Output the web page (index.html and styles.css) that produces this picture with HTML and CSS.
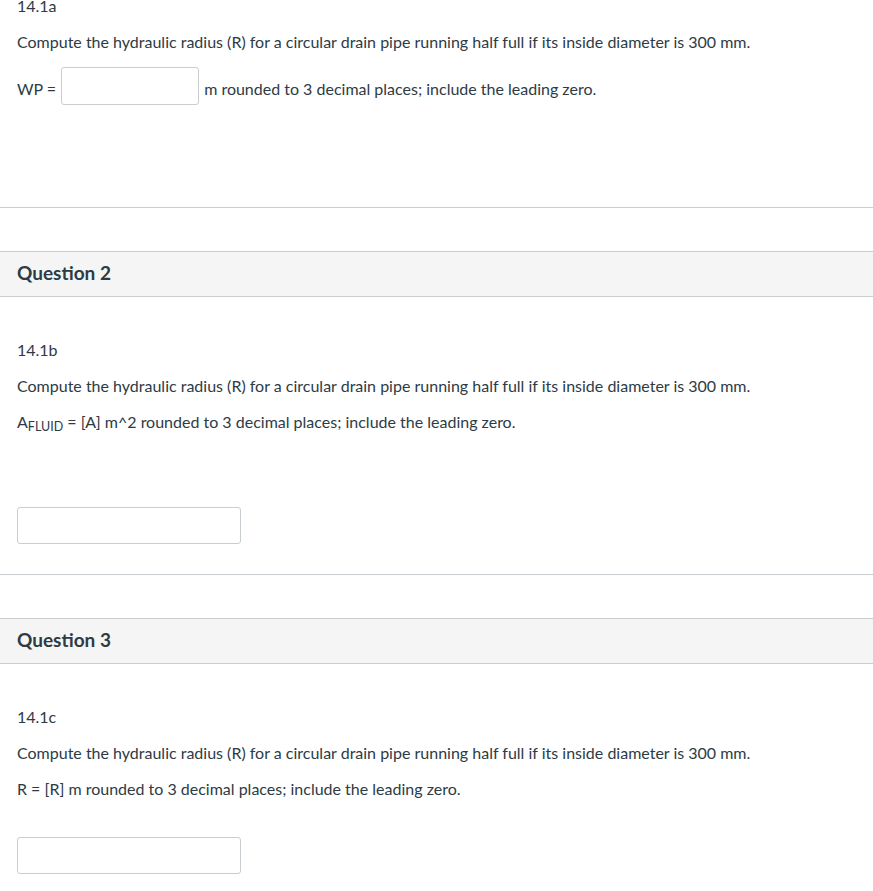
FILE: index.html
```html
<!DOCTYPE html>
<html>
<head>
<meta charset="utf-8">
<link rel="stylesheet" href="styles.css">
</head>
<body>
<div class="page">
  <div class="question first">
    <div class="question-body q1">
      <p>14.1a</p>
      <p>Compute the hydraulic radius (R) for a circular drain pipe running half full if its inside diameter is 300 mm.</p>
      <p class="answer-row"><span class="label">WP =</span><span class="input small"></span><span class="label">m rounded to 3 decimal places; include the leading zero.</span></p>
    </div>
  </div>

  <div class="question">
    <div class="question-header">Question 2</div>
    <div class="question-body">
      <p>14.1b</p>
      <p>Compute the hydraulic radius (R) for a circular drain pipe running half full if its inside diameter is 300 mm.</p>
      <p>A<sub>FLUID</sub> = [A] m^2 rounded to 3 decimal places; include the leading zero.</p>
      <div class="answer"><span class="input wide"></span></div>
    </div>
  </div>

  <div class="question">
    <div class="question-header">Question 3</div>
    <div class="question-body">
      <p>14.1c</p>
      <p>Compute the hydraulic radius (R) for a circular drain pipe running half full if its inside diameter is 300 mm.</p>
      <p>R = [R] m rounded to 3 decimal places; include the leading zero.</p>
      <div class="answer near"><span class="input wide"></span></div>
    </div>
  </div>
</div>
</body>
</html>
```

FILE: styles.css
```css
html, body {
  margin: 0;
  padding: 0;
  background: #ffffff;
}

body {
  font-family: Lato, "Noto Sans", sans-serif;
  font-size: 16px;
  color: #2d3b45;
}

.page {
  margin-top: -5px;
}

.question {
  border-bottom: 1px solid #c7cdd1;
  margin-bottom: 43px;
}

.question-header {
  background: #f5f5f5;
  border-top: 1px solid #c7cdd1;
  border-bottom: 1px solid #c7cdd1;
  box-sizing: border-box;
  height: 46px;
  padding: 0 17px 3px;
  display: flex;
  align-items: center;
  font-weight: bold;
  font-size: 19px;
}

.question-body {
  padding: 42px 17px 30px;
}

.question-body.q1 {
  padding: 0 17px 102px;
}

p {
  margin: 0 0 15px;
  line-height: 21px;
}

.question-body p:last-of-type {
  margin-bottom: 0;
}

.answer-row {
  margin: 0;
  display: flex;
  align-items: center;
  gap: 5px;
  height: 38px;
}

.label {
  padding-top: 4px;
}

sub {
  font-size: 12.5px;
  vertical-align: -3px;
  line-height: 0;
}

.answer {
  margin-top: 75px;
  display: flex;
}

.answer.near {
  margin-top: 38px;
}

.input {
  display: inline-block;
  box-sizing: border-box;
  border: 1px solid #c7cdd1;
  border-radius: 3px;
  background: #fff;
}

.input.small {
  width: 138px;
  height: 38px;
}

.input.wide {
  width: 224px;
  height: 37px;
}
```
